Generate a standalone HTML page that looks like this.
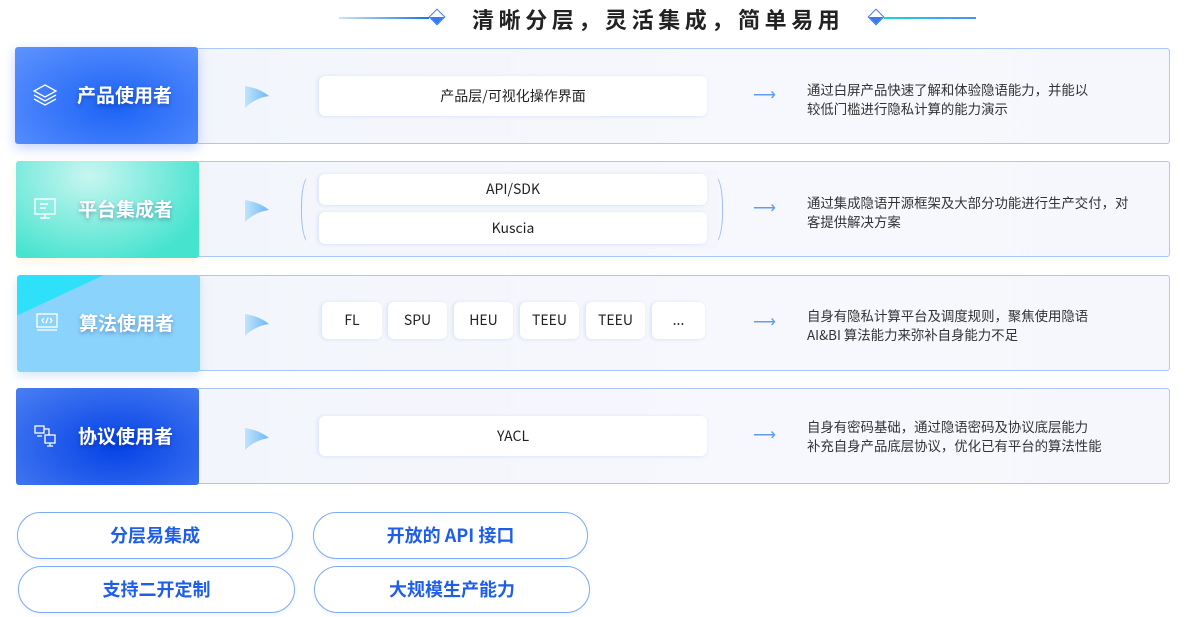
<!DOCTYPE html>
<html><head><meta charset="utf-8"><style>
*{margin:0;padding:0;box-sizing:border-box}
body{width:1189px;height:617px;background:#fff;font-family:"Liberation Sans","Noto Sans CJK SC",sans-serif;position:relative;overflow:hidden}
.a{position:absolute}
.title{left:472px;top:3px;font-size:22px;font-weight:bold;color:#222;letter-spacing:4.6px;font-family:"Noto Sans CJK SC",sans-serif;white-space:nowrap}
.panel{position:absolute;left:196px;width:974px;height:96px;border:1px solid #a8c8fb;border-radius:3px;background:linear-gradient(90deg,#f2f5fb,#f7f8fd 60%,#f5f7fc)}
.lab{position:absolute;width:183px;height:97px;border-radius:3px;color:#fff;font-size:19px;font-weight:bold;font-family:"Noto Sans CJK SC",sans-serif;text-shadow:0 2px 4px rgba(0,0,80,.3)}
.lab span{position:absolute;left:62px;top:36px;line-height:24px}
.lab svg{position:absolute;left:17px;top:36px}
.arr{position:absolute;left:245px;width:24px;height:24px}
.box{position:absolute;background:#fff;border-radius:6px;box-shadow:-2px 0 3px #dfe7fb,0 1px 3px #e5ebf8;font-size:14px;color:#222;text-align:center;font-family:"Noto Sans CJK SC",sans-serif}
.sa{position:absolute;left:753px;color:#5f9cf2;font-size:16px}
.desc{position:absolute;left:807px;font-size:13.4px;color:#333;line-height:19px;font-family:"Noto Sans CJK SC",sans-serif;white-space:nowrap}
.pill{position:absolute;height:47px;border:1.5px solid #7eaaf5;border-radius:24px;color:#1f5ee8;font-weight:bold;font-size:18px;text-align:center;line-height:44px;font-family:"Noto Sans CJK SC",sans-serif;box-shadow:0 2px 4px #eef3fc}
</style></head><body>
<div class="a" style="left:339px;top:17px;width:90px;height:1.5px;background:linear-gradient(90deg,#cfe3f8,#1778d8)"></div>
<div class="a" style="left:431px;top:11px;width:12px;height:12px;border:1.5px solid #3a7af0;transform:rotate(45deg);background:linear-gradient(135deg,#fff 50%,#3a7af0 50%)"></div>
<div class="title a">清晰分层，灵活集成，简单易用</div>
<div class="a" style="left:870px;top:11px;width:12px;height:12px;border:1.5px solid #3a7af0;transform:rotate(45deg);background:linear-gradient(135deg,#fff 50%,#3a7af0 50%)"></div>
<div class="a" style="left:884px;top:17px;width:92px;height:1.5px;background:linear-gradient(90deg,#1bd4e0,#4a90f0)"></div>

<!-- row1 -->
<div class="panel" style="top:48px"></div>
<div class="lab" style="left:15px;top:47px;background:radial-gradient(ellipse at 55% 60%,#1b62f5,#5f94ff);box-shadow:0 4px 12px rgba(60,110,250,.3)">
<svg width="26" height="24" viewBox="0 0 26 24" fill="none" stroke="#fff" stroke-width="1.3"><path d="M13 2L24 8 13 14 2 8Z"/><path d="M2 12l11 6 11-6"/><path d="M2 16l11 6 11-6"/></svg><span>产品使用者</span></div>
<svg class="arr" style="top:84px" viewBox="0 0 24 24"><defs><linearGradient id="g" x1="0" y1="0" x2="1" y2="0"><stop offset="0" stop-color="#c2e4fb"/><stop offset="1" stop-color="#6cb8f5"/></linearGradient></defs><path d="M0 2 Q14 4 24 12 Q10 14 0 24Z" fill="url(#g)"/></svg>
<div class="box" style="left:319px;top:76px;width:388px;height:40px;line-height:40px">产品层/可视化操作界面</div>
<div class="sa" style="top:85px">⟶</div>
<div class="desc" style="top:80px">通过白屏产品快速了解和体验隐语能力，并能以<br>较低门槛进行隐私计算的能力演示</div>

<!-- row2 -->
<div class="panel" style="top:161px"></div>
<div class="lab" style="left:16px;top:161px;background:radial-gradient(ellipse at 40% 15%,#c8f6f0,#46e3cf 80%);box-shadow:0 4px 10px rgba(250,230,180,.4)">
<svg width="26" height="24" viewBox="0 0 26 24" fill="none" stroke="#fff" stroke-width="1.4"><rect x="2" y="2" width="20" height="15"/><path d="M7 7h8M7 11h6M12 17v4M7 21h10"/></svg><span>平台集成者</span></div>
<svg class="arr" style="top:198px" viewBox="0 0 24 24"><path d="M0 2 Q14 4 24 12 Q10 14 0 24Z" fill="url(#g)"/></svg>
<div class="a" style="left:301px;top:176px;width:422px;height:67px;border:1px solid #9cc0f5;border-radius:8px/30px;"></div>
<div class="a" style="left:306px;top:170px;width:412px;height:79px;background:#f4f6fc"></div>
<div class="box" style="left:319px;top:174px;width:388px;height:31px;line-height:31px">API/SDK</div>
<div class="box" style="left:319px;top:212px;width:388px;height:32px;line-height:32px">Kuscia</div>
<div class="sa" style="top:198px">⟶</div>
<div class="desc" style="top:193px">通过集成隐语开源框架及大部分功能进行生产交付，对<br>客提供解决方案</div>

<!-- row3 -->
<div class="panel" style="top:275px"></div>
<div class="lab" style="left:17px;top:275px;background:linear-gradient(155deg,#2fe0fb 22%,#8ad3fc 22.5%);box-shadow:0 4px 10px rgba(120,180,230,.3)">
<svg width="26" height="24" viewBox="0 0 26 24" fill="none" stroke="#fff" stroke-width="1.3"><rect x="3" y="3" width="20" height="13"/><path d="M3 19h20"/><path d="M10 7l-2 2.5 2 2.5M16 7l2 2.5-2 2.5M14 6.5l-2 6"/></svg><span>算法使用者</span></div>
<svg class="arr" style="top:312px" viewBox="0 0 24 24"><path d="M0 2 Q14 4 24 12 Q10 14 0 24Z" fill="url(#g)"/></svg>
<div class="box" style="left:322px;top:302px;width:60px;height:37px;line-height:37px">FL</div>
<div class="box" style="left:388px;top:302px;width:59px;height:37px;line-height:37px">SPU</div>
<div class="box" style="left:454px;top:302px;width:59px;height:37px;line-height:37px">HEU</div>
<div class="box" style="left:520px;top:302px;width:59px;height:37px;line-height:37px">TEEU</div>
<div class="box" style="left:586px;top:302px;width:59px;height:37px;line-height:37px">TEEU</div>
<div class="box" style="left:652px;top:302px;width:53px;height:37px;line-height:37px">...</div>
<div class="sa" style="top:312px">⟶</div>
<div class="desc" style="top:306px">自身有隐私计算平台及调度规则，聚焦使用隐语<br>AI&amp;BI 算法能力来弥补自身能力不足</div>

<!-- row4 -->
<div class="panel" style="top:388px"></div>
<div class="lab" style="left:16px;top:388px;background:radial-gradient(ellipse at 55% 60%,#0542e6,#4a7ff2);">
<svg width="26" height="26" viewBox="0 0 26 26" fill="none" stroke="#fff" stroke-width="1.3"><rect x="2" y="2" width="9" height="7"/><path d="M4 12h5M11 5h5v6"/><rect x="12" y="11" width="10" height="8"/><path d="M17 19v3M14 22h6"/></svg><span>协议使用者</span></div>
<svg class="arr" style="top:426px" viewBox="0 0 24 24"><path d="M0 2 Q14 4 24 12 Q10 14 0 24Z" fill="url(#g)"/></svg>
<div class="box" style="left:319px;top:416px;width:388px;height:40px;line-height:40px">YACL</div>
<div class="sa" style="top:425px">⟶</div>
<div class="desc" style="top:417px">自身有密码基础，通过隐语密码及协议底层能力<br>补充自身产品底层协议，优化已有平台的算法性能</div>

<div class="pill" style="left:17px;top:512px;width:276px">分层易集成</div>
<div class="pill" style="left:313px;top:512px;width:275px">开放的 API 接口</div>
<div class="pill" style="left:18px;top:566px;width:277px">支持二开定制</div>
<div class="pill" style="left:314px;top:566px;width:276px">大规模生产能力</div>
</body></html>
